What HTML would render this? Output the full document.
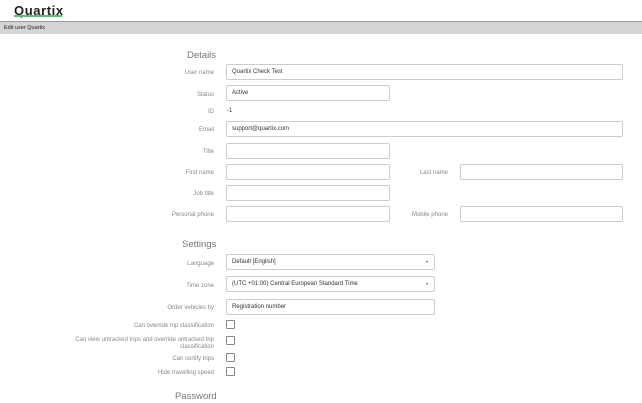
<!DOCTYPE html>
<html><head><style>
body{margin:0;width:642px;height:403px;overflow:hidden;background:#fff;font-family:"Liberation Sans",sans-serif;position:relative}
.a{position:absolute}
.lbl{position:absolute;right:428px;font-size:6px;color:#888;text-align:right;line-height:7px;margin-top:2px}
.in{position:absolute;height:14px;border:1px solid #ccc;border-radius:2px;background:#fff;font-size:6px;color:#333;line-height:14px;padding-left:5px;box-sizing:content-box}
.h{position:absolute;font-size:9.5px;color:#777}
.cb{position:absolute;left:226px;width:7px;height:7px;border:1px solid #888;border-radius:1px}
.arr{position:absolute;right:6px;top:6px;width:0;height:0;border-left:1.5px solid transparent;border-right:1.5px solid transparent;border-top:2px solid #555}
</style></head><body>
<div class="a" style="left:14px;top:3px;font-size:13px;font-weight:bold;color:#222;letter-spacing:0.6px">Quartix</div>
<div class="a" style="left:14px;top:15px;width:48px;height:1.5px;background:#5dbb7f"></div>
<div class="a" style="left:0;top:21px;width:642px;height:1px;background:#999"></div>
<div class="a" style="left:0;top:22px;width:642px;height:12px;background:#d4d4d4;font-size:5.5px;color:#222;line-height:12px;padding-left:4px">Edit user Quartix</div>

<div class="h" style="left:187px;top:50px">Details</div>
<div class="lbl" style="top:68px">User name</div><div class="in" style="left:226px;top:64px;width:390px">Quartix Check Test</div>
<div class="lbl" style="top:90px">Status</div><div class="in" style="left:226px;top:85px;width:157px">Active</div>
<div class="lbl" style="top:107px">ID</div><div class="a" style="left:227px;top:108px;font-size:6px;color:#333">-1</div>
<div class="lbl" style="top:125px">Email</div><div class="in" style="left:226px;top:121px;width:390px">support@quartix.com</div>
<div class="lbl" style="top:147px">Title</div><div class="in" style="left:226px;top:143px;width:157px"></div>
<div class="lbl" style="top:168px">First name</div><div class="in" style="left:226px;top:164px;width:157px"></div>
<div class="lbl" style="top:168px;right:194px">Last name</div><div class="in" style="left:460px;top:164px;width:156px"></div>
<div class="lbl" style="top:189px">Job title</div><div class="in" style="left:226px;top:185px;width:157px"></div>
<div class="lbl" style="top:210px">Personal phone</div><div class="in" style="left:226px;top:206px;width:157px"></div>
<div class="lbl" style="top:210px;right:194px">Mobile phone</div><div class="in" style="left:460px;top:206px;width:156px"></div>

<div class="h" style="left:182px;top:239px">Settings</div>
<div class="lbl" style="top:259px">Language</div><div class="in" style="left:226px;top:254px;width:202px">Default [English]<div class="arr"></div></div>
<div class="lbl" style="top:281px">Time zone</div><div class="in" style="left:226px;top:276px;width:202px">(UTC +01:00) Central European Standard Time<div class="arr"></div></div>
<div class="lbl" style="top:303px">Order vehicles by</div><div class="in" style="left:226px;top:299px;width:202px">Registration number</div>
<div class="lbl" style="top:321px">Can override trip classification</div><div class="cb" style="top:320px"></div>
<div class="lbl" style="top:335px">Can view untracked trips and override untracked trip<br>classification</div><div class="cb" style="top:336px"></div>
<div class="lbl" style="top:354px">Can certify trips</div><div class="cb" style="top:353px"></div>
<div class="lbl" style="top:368px">Hide travelling speed</div><div class="cb" style="top:367px"></div>

<div class="h" style="left:175px;top:391px">Password</div>
</body></html>
